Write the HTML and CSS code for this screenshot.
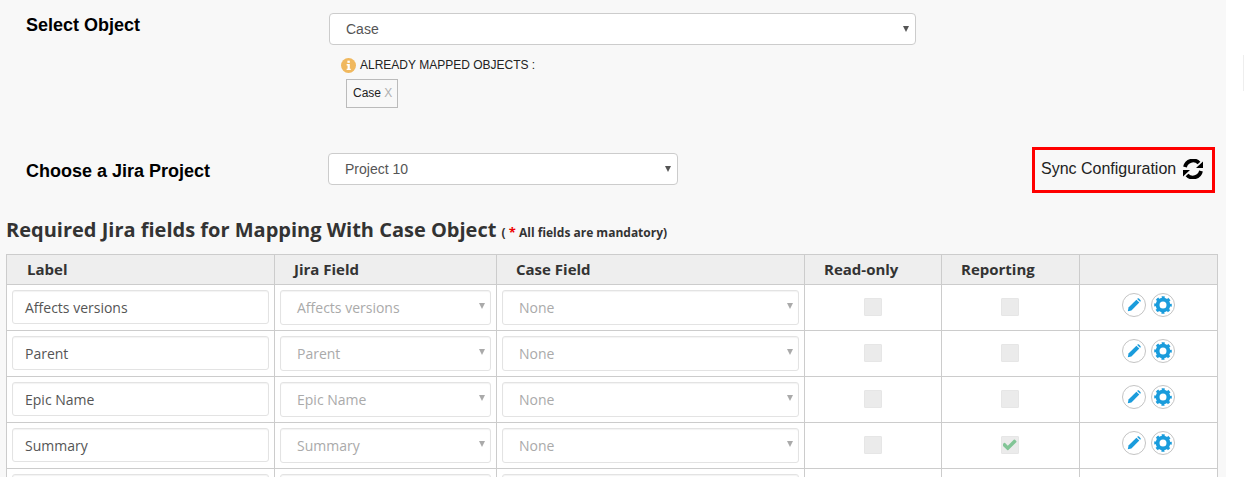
FILE: index.html
```html
<!DOCTYPE html>
<html lang="en">
<head>
<meta charset="utf-8">
<title>Jira field mapping</title>
<link rel="stylesheet" href="styles.css">
</head>
<body>
<svg class="sprites" aria-hidden="true">
  <symbol id="i-refresh" viewBox="0 0 20 20">
    <path class="sync-arc" d="M2 8A8.25 8.25 0 0 1 16 4"/>
    <path class="sync-arc" d="M18 12A8.25 8.25 0 0 1 4 16"/>
    <path d="M20 2.5V9h-7z"/>
    <path d="M0 17.5V11h7z"/>
  </symbol>
  <symbol id="i-pencil" viewBox="0 0 14 14">
    <path d="M.8 13.2l.7-3.6 7.9-7.9 2.9 2.9-7.9 7.9z"/>
    <path d="M10.2.9l.3-.3a1.1 1.1 0 0 1 1.5 0l1.4 1.4a1.1 1.1 0 0 1 0 1.5l-.3.3z"/>
  </symbol>
  <symbol id="i-cog" viewBox="0 0 18 18">
    <circle class="cog-ring" cx="9" cy="9" r="5.4"/>
    <circle class="cog-teeth" cx="9" cy="9" r="7.6"/>
  </symbol>
  <symbol id="i-check" viewBox="0 0 1536 1536"><path d="M1412 400q0 40-28 68l-724 724-136 136q-28 28-68 28t-68-28l-136-136-362-362q-28-28-28-68t28-68l136-136q28-28 68-28t68 28l294 295 656-657q28-28 68-28t68 28l136 136q28 28 28 68z" transform="translate(70 0)"/></symbol>
</svg>
<main class="page">
  <section class="object-row">
    <h2 class="field-label">Select Object</h2>
    <div class="object-col">
      <div class="select-wrap select-object"><div class="select-box">Case</div></div>
      <p class="note">
        <svg class="info-icon" viewBox="0 0 16 16" aria-hidden="true"><circle cx="8" cy="8" r="8"/><rect class="info-mark" x="6.8" y="2.8" width="2.6" height="2.4"/><path class="info-mark" d="M6 6.4h3.4v5h1v1.5H6v-1.5h1v-3.5H6z"/></svg>
        ALREADY MAPPED OBJECTS :
      </p>
      <div class="chip">Case <span class="chip-x">X</span></div>
    </div>
  </section>

  <section class="project-row">
    <h2 class="field-label project-label">Choose a Jira Project</h2>
    <div class="select-wrap select-project"><div class="select-box">Project 10</div></div>
    <button class="sync" type="button">Sync Configuration
      <svg class="sync-icon" aria-hidden="true"><use href="#i-refresh"/></svg>
    </button>
  </section>

  <h1 class="title">Required Jira fields for Mapping With Case Object <small class="title-note">( <span class="star">*</span> All fields are mandatory)</small></h1>

  <table class="map-table">
    <colgroup>
      <col class="c-label"><col class="c-jira"><col class="c-case"><col class="c-read"><col class="c-report"><col class="c-actions">
    </colgroup>
    <thead>
      <tr><th>Label</th><th>Jira Field</th><th>Case Field</th><th>Read-only</th><th>Reporting</th><th></th></tr>
    </thead>
    <tbody>
      <tr>
        <td><div class="input">Affects versions</div></td>
        <td><div class="select-wrap muted"><div class="select-box">Affects versions</div></div></td>
        <td><div class="select-wrap muted"><div class="select-box">None</div></div></td>
        <td class="center"><span class="check"></span></td>
        <td class="center"><span class="check"></span></td>
        <td class="actions"><span class="round"><svg aria-hidden="true"><use href="#i-pencil"/></svg></span><span class="round"><svg class="cog" aria-hidden="true"><use href="#i-cog"/></svg></span></td>
      </tr>
      <tr>
        <td><div class="input">Parent</div></td>
        <td><div class="select-wrap muted"><div class="select-box">Parent</div></div></td>
        <td><div class="select-wrap muted"><div class="select-box">None</div></div></td>
        <td class="center"><span class="check"></span></td>
        <td class="center"><span class="check"></span></td>
        <td class="actions"><span class="round"><svg aria-hidden="true"><use href="#i-pencil"/></svg></span><span class="round"><svg class="cog" aria-hidden="true"><use href="#i-cog"/></svg></span></td>
      </tr>
      <tr>
        <td><div class="input">Epic Name</div></td>
        <td><div class="select-wrap muted"><div class="select-box">Epic Name</div></div></td>
        <td><div class="select-wrap muted"><div class="select-box">None</div></div></td>
        <td class="center"><span class="check"></span></td>
        <td class="center"><span class="check"></span></td>
        <td class="actions"><span class="round"><svg aria-hidden="true"><use href="#i-pencil"/></svg></span><span class="round"><svg class="cog" aria-hidden="true"><use href="#i-cog"/></svg></span></td>
      </tr>
      <tr>
        <td><div class="input">Summary</div></td>
        <td><div class="select-wrap muted"><div class="select-box">Summary</div></div></td>
        <td><div class="select-wrap muted"><div class="select-box">None</div></div></td>
        <td class="center"><span class="check"></span></td>
        <td class="center"><span class="check"><svg class="tick" aria-hidden="true"><use href="#i-check"/></svg></span></td>
        <td class="actions"><span class="round"><svg aria-hidden="true"><use href="#i-pencil"/></svg></span><span class="round"><svg class="cog" aria-hidden="true"><use href="#i-cog"/></svg></span></td>
      </tr>
      <tr>
        <td><div class="input">&nbsp;</div></td>
        <td><div class="select-wrap muted"><div class="select-box">&nbsp;</div></div></td>
        <td><div class="select-wrap muted"><div class="select-box">&nbsp;</div></div></td>
        <td></td><td></td><td></td>
      </tr>
    </tbody>
  </table>
</main>
<div class="edge-mark"></div>
</body>
</html>
```

FILE: styles.css
```css
* { box-sizing: border-box; }

html, body {
  margin: 0;
  height: 477px;
  overflow: hidden;
  background: #fff;
}

.sprites { display: none; }

.page {
  width: 1226px;
  height: 477px;
  overflow: hidden;
  padding: 13px 8px 0 6px;
  background: #f8f8f8;
  font-family: "Open Sans", sans-serif;
  color: #333;
}

.object-row {
  display: flex;
  padding-left: 20px;
}

.field-label {
  flex: none;
  width: 303px;
  margin: 0;
  font: bold 18px/24px "Liberation Sans", sans-serif;
  color: #000;
}

.object-col { width: 587px; }

.select-wrap { position: relative; }

.select-wrap::after {
  content: "";
  position: absolute;
  top: 50%;
  right: 7px;
  margin-top: -3px;
  border-left: 3px solid transparent;
  border-right: 3px solid transparent;
  border-top: 6px solid #555;
}

.select-box {
  height: 32px;
  padding-left: 16px;
  border: 1px solid #ccc;
  border-radius: 4px;
  background: #fff;
  font: 14px/30px "Liberation Sans", sans-serif;
  color: #555;
}

.select-project { flex: none; width: 350px; margin-bottom: 2px; }

.note {
  display: flex;
  align-items: center;
  gap: 4px;
  margin: 13px 0 0 12px;
  height: 15px;
  font: 12px/15px "Liberation Sans", sans-serif;
  color: #222;
}

.info-icon { width: 15px; height: 15px; fill: #f0b85e; }
.info-mark { fill: #fff; }

.chip {
  width: 52px;
  height: 29px;
  margin: 6px 0 0 17px;
  padding-left: 6px;
  border: 1px solid #bbb;
  font: 12px/27px "Liberation Sans", sans-serif;
  color: #222;
}

.chip-x { color: #b0b0b0; }

.project-row {
  display: flex;
  align-items: center;
  height: 46px;
  margin-top: 39px;
  padding: 0 3px 0 20px;
}

.project-label { width: 302px; margin-top: 2px; }

.sync {
  display: flex;
  align-items: center;
  gap: 6px;
  width: 183px;
  height: 46px;
  margin-left: auto;
  padding: 0 0 2px 6px;
  border: 3px solid #f00;
  background: transparent;
  font: 16px/20px "Liberation Sans", sans-serif;
  color: #222;
}

.sync-icon { width: 20px; height: 20px; margin-left: 1px; fill: #000; }

.sync-arc {
  fill: none;
  stroke: #000;
  stroke-width: 3.8;
}

.title {
  margin: 23px 0 0;
  height: 38px;
  font-size: 20px;
  font-weight: 700;
  line-height: 28px;
  color: #333;
}

.title-note { font-size: 12px; font-weight: 700; }
.star { color: #e00; font-size: 13px; }

.map-table {
  width: 1211px;
  table-layout: fixed;
  border-collapse: collapse;
  background: #fff;
}

.c-label { width: 268px; }
.c-jira { width: 222px; }
.c-case { width: 308px; }
.c-read { width: 137px; }
.c-report { width: 138px; }
.c-actions { width: 138px; }

.map-table th,
.map-table td { border: 1px solid #ccc; }

.map-table th {
  height: 30px;
  padding: 0 0 2px 20px;
  background: #eee;
  font-size: 15px;
  font-weight: 700;
  text-align: left;
  color: #333;
}

.map-table th + th { padding-left: 19px; }

.map-table td {
  height: 46px;
  padding: 5px;
  vertical-align: top;
}

.input {
  height: 34px;
  padding-left: 12px;
  border: 1px solid #e3e3e3;
  border-radius: 3px;
  box-shadow: inset 0 1px 1px rgba(0, 0, 0, .05);
  font-size: 14px;
  line-height: 34px;
  color: #555;
}

.muted .select-box {
  height: 35px;
  padding-left: 16px;
  border-color: #e3e3e3;
  border-radius: 3px;
  box-shadow: inset 0 1px 1px rgba(0, 0, 0, .05);
  font-family: "Open Sans", sans-serif;
  line-height: 34px;
  color: #aaa;
}

.muted::after {
  top: 13px;
  margin-top: 0;
  right: 6px;
  border-top-color: #aaa;
}

.map-table td.center { padding: 13px 6px 5px 5px; text-align: center; }

.check {
  display: inline-block;
  width: 18px;
  height: 18px;
  border: 1px solid #e6e6e6;
  border-radius: 1px;
  background: #ebebeb;
  vertical-align: top;
}

.tick { display: block; width: 14px; height: 14px; margin: 1px; fill: #82c596; }

.map-table td.actions { padding: 8px 0 0; }

.actions { text-align: center; }

.round {
  display: inline-flex;
  align-items: center;
  justify-content: center;
  width: 24px;
  height: 24px;
  margin: 0 2.5px;
  border: 1px solid #c4c4c4;
  border-radius: 50%;
  background: #fff;
  vertical-align: top;
}

.round svg { width: 14px; height: 14px; fill: #1a9cdc; }
.round .cog { width: 18px; height: 18px; }

.cog-ring {
  fill: none;
  stroke: #1a9cdc;
  stroke-width: 3.8;
}

.cog-teeth {
  fill: none;
  stroke: #1a9cdc;
  stroke-width: 2.4;
  stroke-dasharray: 3 2.97;
  stroke-dashoffset: 1.5;
}

.edge-mark {
  position: absolute;
  top: 55px;
  left: 1243px;
  width: 1px;
  height: 36px;
  background: #eee;
}
```
